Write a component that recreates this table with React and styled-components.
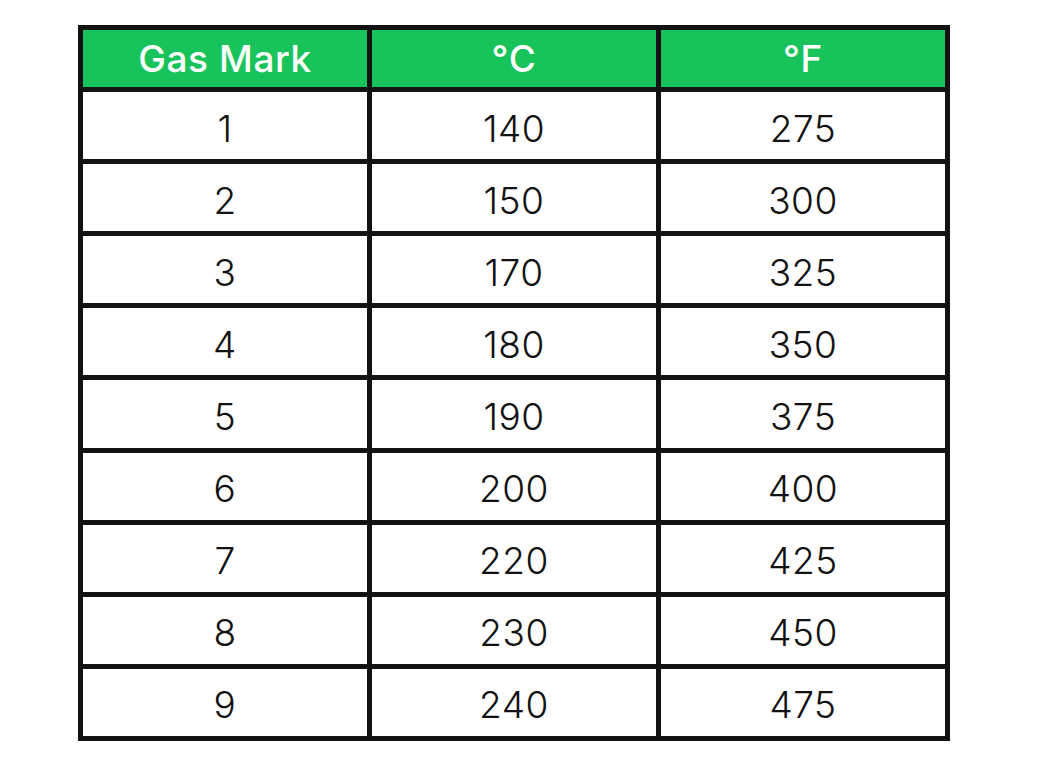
import styled, { createGlobalStyle } from "styled-components";

const GlobalStyle = createGlobalStyle`
  html, body {
    margin: 0;
    padding: 0;
    background: #ffffff;
  }
  body {
    font-family: Inter, "Noto Sans", sans-serif;
  }
`;

const rows = [
  ["1", "140", "275"],
  ["2", "150", "300"],
  ["3", "170", "325"],
  ["4", "180", "350"],
  ["5", "190", "375"],
  ["6", "200", "400"],
  ["7", "220", "425"],
  ["8", "230", "450"],
  ["9", "240", "475"],
];

const App = () => {
  return (
    <Page>
      <GlobalStyle />
      <Table>
        <Cell $header>Gas Mark</Cell>
        <Cell $header>°C</Cell>
        <Cell $header>°F</Cell>
        {rows.map((row) =>
          row.map((value, i) => <Cell key={row[0] + "-" + i}>{value}</Cell>)
        )}
      </Table>
    </Page>
  );
};

const Page = styled.div`
  padding: 25px 0 0 78px;
`;

const Table = styled.div`
  display: grid;
  grid-template-columns: repeat(3, 284px);
  grid-template-rows: 57px repeat(9, 1fr);
  gap: 5px;
  padding: 5px;
  box-sizing: border-box;
  width: max-content;
  height: 716px;
  background: #121212;
`;

const Cell = styled.div`
  display: flex;
  align-items: center;
  justify-content: center;
  padding-top: ${(p) => (p.$header ? "0" : "5px")};
  background: ${(p) => (p.$header ? "#18c35b" : "#ffffff")};
  color: ${(p) => (p.$header ? "#ffffff" : "#111111")};
  font-size: 37px;
  font-weight: ${(p) => (p.$header ? 500 : 300)};
  letter-spacing: ${(p) => (p.$header ? "0.6px" : "0.5px")};
`;

export default App;
